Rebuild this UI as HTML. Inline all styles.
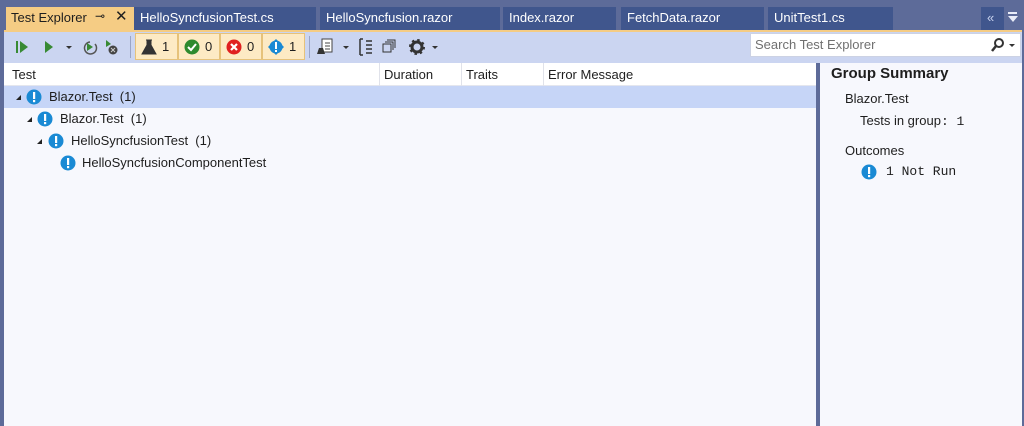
<!DOCTYPE html>
<html><head><meta charset="utf-8"><style>
*{margin:0;padding:0;box-sizing:border-box}
body{width:1024px;height:426px;background:#5d6b99;position:relative;overflow:hidden;font-family:"Segoe UI","Liberation Sans",sans-serif;font-size:13px;color:#1e1e1e}
.a{position:absolute}
.tab{position:absolute;top:7px;height:23px;background:#40568d;color:#fff;padding:3px 0 0 6px;font-size:13px}
.box{position:absolute;top:33px;height:27px;background:#fdeac4;border:1px solid #e6c27a;font-size:13px;padding:5px 0 0 0}
.box span{position:absolute;left:26px;top:5px}
.ic{position:absolute;left:5px;top:5px}
.hdr{position:absolute;top:63px;height:23px;background:#fff;border-bottom:1px solid #e4e6ee}
.sep{position:absolute;top:63px;width:1px;height:23px;background:#e0e2ea}
.row{position:absolute;font-size:13px}
.mono{font-family:"Liberation Mono",monospace}
</style></head><body>
<div class="a" style="left:6px;top:7px;width:128px;height:25px;background:#f5cc84;padding:3px 0 0 5px;font-size:13px">Test Explorer<span style="position:absolute;left:89px;top:2px;font-size:12px">⊸</span><span style="position:absolute;left:109px;top:0px;font-size:15px">✕</span></div>
<div class="tab" style="left:134px;width:182px">HelloSyncfusionTest.cs</div>
<div class="tab" style="left:320px;width:180px">HelloSyncfusion.razor</div>
<div class="tab" style="left:503px;width:113px">Index.razor</div>
<div class="tab" style="left:621px;width:143px">FetchData.razor</div>
<div class="tab" style="left:768px;width:125px">UnitTest1.cs</div>
<div class="tab" style="left:981px;width:23px;padding:3px 0 0 6px;color:#c9d3ee">«</div>
<div class="a" style="left:1008px;top:12px;width:9px;height:2px;background:#e8ecf8"></div>
<div class="a" style="left:1008px;top:16px;width:0;height:0;border-left:5px solid transparent;border-right:5px solid transparent;border-top:6px solid #e8ecf8"></div>
<div class="a" style="left:4px;top:30px;width:1018px;height:2px;background:#f5cc84"></div>
<div class="a" style="left:4px;top:32px;width:1018px;height:31px;background:#cbd5f1"></div>
<svg class="a" style="left:10px;top:36px" width="120" height="22">
<rect x="6" y="5" width="2" height="12" fill="#388a34"/><path d="M10 5 L18 11 L10 17Z" fill="#388a34"/>
<path d="M35 5 L43 11 L35 17Z" fill="#388a34"/><path d="M56 10 l6 0 l-3 3z" fill="#333"/>
<path d="M80 6 a6 6 0 1 0 5 2" stroke="#555" stroke-width="1.5" fill="none"/><path d="M77 7 L83 11 L77 15Z" fill="#388a34"/>
<path d="M96 4 L101 8 L96 11Z" fill="#388a34"/><circle cx="103" cy="14" r="4.5" fill="#444"/><path d="M101 12l4 4M105 12l-4 4" stroke="#ccc" stroke-width="1"/>
</svg>
<div class="a" style="left:130px;top:36px;width:1px;height:22px;background:#9aa5c6"></div>
<div class="box" style="left:135px;width:43px"><svg class="ic" width="16" height="16"><path d="M5 1h6M6 1v5L1 15h14L10 6V1" fill="#333" stroke="#333"/></svg><span>1</span></div>
<div class="box" style="left:178px;width:42px"><svg class="ic" width="16" height="16"><circle cx="8" cy="8" r="7.5" fill="#2e8a2e"/><path d="M4 8l3 3 5-6" stroke="#fff" stroke-width="2" fill="none"/></svg><span>0</span></div>
<div class="box" style="left:220px;width:42px"><svg class="ic" width="16" height="16"><circle cx="8" cy="8" r="7.5" fill="#e02020"/><path d="M5 5l6 6M11 5l-6 6" stroke="#fff" stroke-width="2.2"/></svg><span>0</span></div>
<div class="box" style="left:262px;width:43px"><svg class="ic" width="16" height="16"><path d="M8 0L16 8L8 16L0 8Z" fill="#1a8ad4"/><circle cx="8" cy="8" r="6.5" fill="#1a8ad4"/><rect x="7" y="3" width="2" height="7" fill="#fff"/><rect x="7" y="11" width="2" height="2" fill="#fff"/></svg><span>1</span></div>
<div class="a" style="left:309px;top:36px;width:1px;height:22px;background:#9aa5c6"></div>
<svg class="a" style="left:316px;top:36px" width="130" height="22">
<rect x="6" y="3" width="10" height="13" fill="#fff" stroke="#444"/><path d="M9 7h5M9 10h5M9 13h5" stroke="#444"/><path d="M3 12h4l2 6H1z" fill="#333"/>
<path d="M27 10h6l-3 3z" fill="#333"/>
<path d="M44 3v16M44 3h3M44 19h3M50 5h6M50 9h6M50 13h6M50 17h6" stroke="#333" stroke-width="1.5"/>
<rect x="67" y="8" width="8" height="8" fill="none" stroke="#333"/><path d="M69 6h8v8M71 4h8v8" fill="none" stroke="#333"/>
<circle cx="101" cy="11" r="5" fill="none" stroke="#333" stroke-width="3"/><circle cx="101" cy="11" r="7" fill="none" stroke="#333" stroke-width="2" stroke-dasharray="2.5 3"/>
<path d="M116 10h6l-3 3z" fill="#333"/>
</svg>
<div class="a" style="left:750px;top:33px;width:271px;height:24px;background:#fff;border:1px solid #ccd2e4;color:#707070;padding:3px 0 0 4px;font-size:13px">Search Test Explorer</div>
<svg class="a" style="left:990px;top:37px" width="30" height="16"><circle cx="9" cy="6" r="4" fill="none" stroke="#333" stroke-width="2"/><path d="M6 9L2 14" stroke="#333" stroke-width="2.5"/><path d="M19 7h6l-3 3z" fill="#333"/></svg>
<div class="a" style="left:4px;top:63px;width:812px;height:363px;background:#f7f8fd"></div>
<div class="hdr" style="left:4px;width:812px"></div>
<div class="a" style="left:12px;top:67px">Test</div>
<div class="sep" style="left:379px"></div><div class="a" style="left:384px;top:67px">Duration</div>
<div class="sep" style="left:461px"></div><div class="a" style="left:466px;top:67px">Traits</div>
<div class="sep" style="left:543px"></div><div class="a" style="left:548px;top:67px">Error Message</div>
<div class="a" style="left:4px;top:86px;width:812px;height:22px;background:#c6d5f7"></div>
<svg class="a" style="left:0;top:86px" width="80" height="90">
<defs><g id="ex"><circle cx="8" cy="8" r="7.5" fill="#1a8ad4"/><rect x="7" y="3" width="2.2" height="7" fill="#fff"/><rect x="7" y="11" width="2.2" height="2.2" fill="#fff"/></g></defs>
<path d="M16 14l5-5v5z" fill="#222"/><use href="#ex" x="26" y="3"/>
<path d="M27 36l5-5v5z" fill="#222"/><use href="#ex" x="37" y="25"/>
<path d="M37 58l5-5v5z" fill="#222"/><use href="#ex" x="48" y="47"/>
<use href="#ex" x="60" y="69"/>
</svg>
<div class="row" style="left:49px;top:89px">Blazor.Test&nbsp; (1)</div>
<div class="row" style="left:60px;top:111px">Blazor.Test&nbsp; (1)</div>
<div class="row" style="left:71px;top:133px">HelloSyncfusionTest&nbsp; (1)</div>
<div class="row" style="left:82px;top:155px">HelloSyncfusionComponentTest</div>
<div class="a" style="left:816px;top:63px;width:4px;height:363px;background:#5d6b99"></div>
<div class="a" style="left:820px;top:63px;width:202px;height:363px;background:#f7f8fd"></div>
<div class="a" style="left:831px;top:65px;font-size:15px;font-weight:bold">Group Summary</div>
<div class="a" style="left:845px;top:91px">Blazor.Test</div>
<div class="a" style="left:860px;top:113px">Tests in group<span class="mono">: 1</span></div>
<div class="a" style="left:845px;top:143px">Outcomes</div>
<svg class="a" style="left:861px;top:164px" width="16" height="16"><circle cx="8" cy="8" r="7.5" fill="#1a8ad4"/><rect x="7" y="3" width="2.2" height="7" fill="#fff"/><rect x="7" y="11" width="2.2" height="2.2" fill="#fff"/></svg>
<div class="a mono" style="left:886px;top:164px;font-size:13px">1 Not Run</div>
</body></html>
